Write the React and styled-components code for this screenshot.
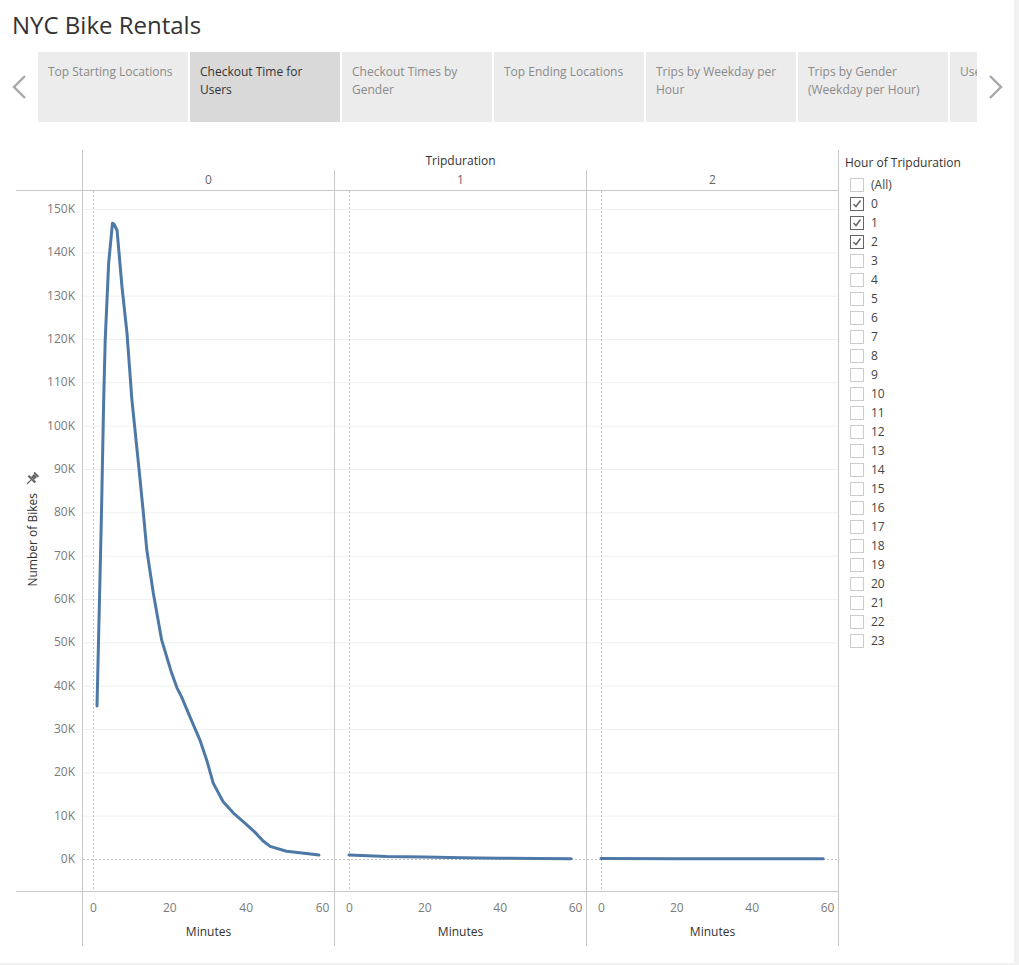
import React from "react";
import styled, { createGlobalStyle } from "styled-components";

const GlobalStyle = createGlobalStyle`
  html, body {
    margin: 0;
    padding: 0;
    background: #f2f2f2;
  }
  body {
    font-family: "Open Sans", "Liberation Sans", sans-serif;
  }
`;

const Page = styled.div`
  width: 1014px;
  height: 963px;
  background: #ffffff;
  overflow: hidden;
`;

const Title = styled.h1`
  margin: 0;
  padding: 10px 12px 0;
  height: 30px;
  line-height: 30px;
  font-size: 24px;
  font-weight: normal;
  color: #333333;
`;

const TabBar = styled.div`
  display: flex;
  margin-top: 12px;
  height: 70px;
`;

const ArrowButton = styled.div`
  width: ${(p) => p.w}px;
  flex: none;
  display: flex;
  align-items: center;
  justify-content: center;
`;

const TabStrip = styled.div`
  flex: 1;
  display: flex;
  gap: 2px;
  overflow: hidden;
`;

const Tab = styled.div`
  flex: none;
  width: 150px;
  box-sizing: border-box;
  padding: 11px 10px 0;
  background: ${(p) => (p.active ? "#d9d9d9" : "#ececec")};
  color: ${(p) => (p.active ? "#333333" : "#8a8a8a")};
  font-size: 12px;
  line-height: 18px;
  overflow: hidden;
`;

const Body = styled.div`
  display: flex;
  margin-top: 28px;
  padding-left: 16px;
`;

const ChartFrame = styled.div`
  display: grid;
  grid-template-columns: 67px repeat(3, 252px);
  grid-template-rows: 20px 21px 701px 29px 25px;
  color: #333333;
  font-size: 12px;
`;

const Cell = styled.div`
  box-sizing: border-box;
  border-right: 1px solid #c8c8c8;
  border-bottom: ${(p) => (p.bottom ? "1px solid #c8c8c8" : "none")};
`;

const Corner = styled(Cell)`
  grid-column: 1;
  grid-row: 1 / 3;
`;

const SuperHeader = styled(Cell)`
  grid-column: 2 / 5;
  grid-row: 1;
  text-align: center;
  line-height: 21px;
  color: #333333;
`;

const PanelHeader = styled(Cell)`
  grid-row: 2;
  text-align: center;
  line-height: 20px;
  color: #666666;
`;

const AxisCell = styled(Cell)`
  grid-column: 1;
  grid-row: 3;
  display: flex;
`;

const AxisTitle = styled.div`
  width: 32px;
  display: flex;
  flex-direction: column;
  align-items: center;
  justify-content: center;
  gap: 7px;
  margin-top: -24px;
`;

const AxisTitleText = styled.span`
  writing-mode: vertical-rl;
  transform: rotate(180deg);
  font-size: 12px;
  color: #333333;
`;

const PlotCell = styled(Cell)`
  grid-row: 3;
`;

const BottomLeft = styled(Cell)`
  grid-column: 1;
  grid-row: 4 / 6;
`;

const TickCell = styled(Cell)`
  grid-row: 4;
`;

const AxisLabel = styled(Cell)`
  grid-row: 5;
  text-align: center;
  line-height: 22px;
  color: #333333;
`;

const Legend = styled.div`
  width: 175px;
  padding: 5px 0 0 6px;
  box-sizing: border-box;
`;

const LegendTitle = styled.div`
  font-size: 12px;
  line-height: 16px;
  color: #333333;
`;

const LegendList = styled.div`
  margin-top: 4px;
  padding-left: 5px;
  display: flex;
  flex-direction: column;
`;

const LegendRow = styled.label`
  display: flex;
  align-items: center;
  gap: 7px;
  height: 19px;
  font-size: 12px;
  color: #444444;
`;

const Box = styled.span`
  width: 14px;
  height: 14px;
  box-sizing: border-box;
  border: 1px solid ${(p) => (p.checked ? "#666666" : "#cccccc")};
  display: flex;
  align-items: center;
  justify-content: center;
  background: #ffffff;
`;

const tabs = [
  "Top Starting Locations",
  "Checkout Time for Users",
  "Checkout Times by Gender",
  "Top Ending Locations",
  "Trips by Weekday per Hour",
  "Trips by Gender (Weekday per Hour)",
  "User Trips by Gender",
];

// minutes -> thousands of bikes, read off the original viz
const series = [
  [
    [1.05, 35.3], [2.2, 78.9], [2.8, 105.9], [3.2, 119.8], [4.1, 137.5],
    [5.1, 146.7], [5.5, 146.5], [6.3, 145.1], [7.6, 132], [8.9, 121.4],
    [10.2, 105.9], [12, 90.5], [13.3, 78.9], [14.1, 71.3], [15.8, 61.4],
    [18, 50.5], [20.6, 42.9], [22, 39.5], [23.2, 37.4], [25.4, 32.8],
    [28, 27.5], [29.8, 22.8], [31.5, 17.5], [34.1, 13.2], [36.8, 10.6],
    [39.8, 8.3], [42.4, 6.2], [44.5, 4.2], [46.4, 2.9], [50.7, 1.8],
    [54.2, 1.45], [59.2, 0.9],
  ],
  [
    [0, 0.95], [10, 0.6], [20, 0.45], [30, 0.3], [40, 0.2], [50, 0.12], [59, 0.08],
  ],
  [
    [0, 0.1], [20, 0.07], [40, 0.05], [59, 0.04],
  ],
];

// pixel position of minute 0 and minute 60 inside each panel
const panelScale = [
  [10, 239],
  [14, 240],
  [14, 240],
];

const PW = 251;
const PH = 700;
const makeX = ([a, b]) => (m) => a + (m * (b - a)) / 60;
const Y = (v) => 668 - (v * 650) / 150;
const yTicks = Array.from({ length: 16 }, (_, i) => i * 10);
const tickFont = '"Open Sans", "Liberation Sans", sans-serif';

const Chevron = ({ dir }) => (
  <svg width="16" height="26" viewBox="0 0 16 26">
    <polyline
      points={dir === "left" ? "14,2 3,13 14,24" : "2,2 13,13 2,24"}
      fill="none"
      stroke="#a8a8a8"
      strokeWidth="2.4"
    />
  </svg>
);

const PinIcon = () => (
  <svg width="14" height="14" viewBox="0 0 12 12">
    <g transform="rotate(45 6 6)" fill="#666666">
      <rect x="3.4" y="0" width="5.2" height="1.7" />
      <rect x="4.2" y="1.7" width="3.6" height="3.5" />
      <rect x="1.8" y="5.2" width="8.4" height="1.9" />
      <rect x="5.45" y="7.1" width="1.1" height="4.9" />
    </g>
  </svg>
);

const Check = () => (
  <svg width="10" height="10" viewBox="0 0 10 10">
    <polyline points="1.5,5 4,7.5 8.5,1.5" fill="none" stroke="#666666" strokeWidth="1.5" />
  </svg>
);

const Plot = ({ data, scale }) => {
  const X = makeX(scale);
  return (
    <svg width={PW} height={PH} style={{ display: "block" }}>
      {yTicks.slice(1).map((v) => (
        <line key={v} x1="0" x2={PW} y1={Y(v) + 0.5} y2={Y(v) + 0.5} stroke="#efefef" strokeWidth="1" />
      ))}
      <line x1="0" x2={PW} y1={Y(0) + 0.5} y2={Y(0) + 0.5} stroke="#c4c4c4" strokeDasharray="2 2" />
      <line x1={X(0) + 0.5} x2={X(0) + 0.5} y1="0" y2={PH} stroke="#c4c4c4" strokeDasharray="2 2" />
      <polyline
        points={data.map(([m, v]) => `${X(m)},${Y(v)}`).join(" ")}
        fill="none"
        stroke="#4e79a7"
        strokeWidth="3"
        strokeLinejoin="round"
        strokeLinecap="round"
      />
    </svg>
  );
};

const YTicks = () => (
  <svg width="34" height={PH} style={{ display: "block" }}>
    {yTicks.map((v) => (
      <text key={v} x="27" y={Y(v) + 4} textAnchor="end" fontSize="12" fill="#7a7a7a" fontFamily={tickFont}>
        {v}K
      </text>
    ))}
  </svg>
);

const XTicks = ({ scale }) => {
  const X = makeX(scale);
  return (
    <svg width={PW} height="28" style={{ display: "block" }}>
      {[0, 20, 40, 60].map((m) => (
        <text key={m} x={X(m) + 0.5} y="20" textAnchor="middle" fontSize="12" fill="#7a7a7a" fontFamily={tickFont}>
          {m}
        </text>
      ))}
    </svg>
  );
};

const hours = Array.from({ length: 24 }, (_, i) => i);
const checkedHours = [0, 1, 2];

export default function App() {
  return (
    <Page>
      <GlobalStyle />
      <Title>NYC Bike Rentals</Title>
      <TabBar>
        <ArrowButton w={38}>
          <Chevron dir="left" />
        </ArrowButton>
        <TabStrip>
          {tabs.map((t, i) => (
            <Tab key={t} active={i === 1}>
              {t}
            </Tab>
          ))}
        </TabStrip>
        <ArrowButton w={37}>
          <Chevron dir="right" />
        </ArrowButton>
      </TabBar>
      <Body>
        <ChartFrame>
          <Corner bottom />
          <SuperHeader>Tripduration</SuperHeader>
          {[0, 1, 2].map((p) => (
            <PanelHeader key={`h${p}`} bottom style={{ gridColumn: p + 2 }}>
              {p}
            </PanelHeader>
          ))}
          <AxisCell bottom>
            <AxisTitle>
              <PinIcon />
              <AxisTitleText>Number of Bikes</AxisTitleText>
            </AxisTitle>
            <YTicks />
          </AxisCell>
          {series.map((d, p) => (
            <PlotCell key={`p${p}`} bottom style={{ gridColumn: p + 2 }}>
              <Plot data={d} scale={panelScale[p]} />
            </PlotCell>
          ))}
          <BottomLeft />
          {[0, 1, 2].map((p) => (
            <TickCell key={`t${p}`} style={{ gridColumn: p + 2 }}>
              <XTicks scale={panelScale[p]} />
            </TickCell>
          ))}
          {[0, 1, 2].map((p) => (
            <AxisLabel key={`m${p}`} style={{ gridColumn: p + 2 }}>
              Minutes
            </AxisLabel>
          ))}
        </ChartFrame>
        <Legend>
          <LegendTitle>Hour of Tripduration</LegendTitle>
          <LegendList>
            <LegendRow>
              <Box />
              (All)
            </LegendRow>
            {hours.map((h) => {
              const on = checkedHours.includes(h);
              return (
                <LegendRow key={h}>
                  <Box checked={on}>{on && <Check />}</Box>
                  {h}
                </LegendRow>
              );
            })}
          </LegendList>
        </Legend>
      </Body>
    </Page>
  );
}
